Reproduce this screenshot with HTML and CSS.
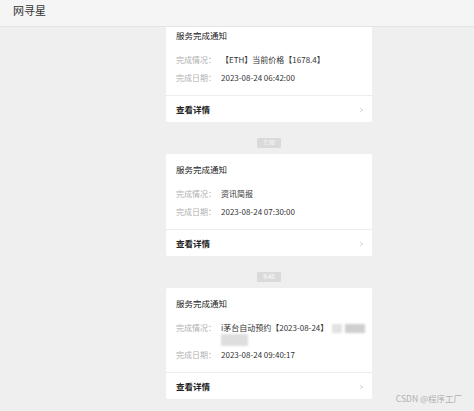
FILE: index.html
```html
<!DOCTYPE html>
<html lang="zh-CN">
<head>
<meta charset="utf-8">
<title>网寻星</title>
<link rel="stylesheet" href="styles.css">
</head>
<body>
<div class="app">
  <header class="topbar"><span class="topbar-title">网寻星</span></header>
  <main class="feed-viewport">
    <div class="feed">
      <section class="card">
        <div class="card-title">服务完成通知</div>
        <div class="rows">
          <div class="row"><span class="label">完成情况：</span><span class="value">【ETH】当前价格【1678.4】</span></div>
          <div class="row"><span class="label">完成日期：</span><span class="value">2023-08-24 06:42:00</span></div>
        </div>
        <div class="card-foot"><span>查看详情</span><span class="chev">&gt;</span></div>
      </section>

      <div class="time"><span class="badge">7:30</span></div>

      <section class="card">
        <div class="card-title">服务完成通知</div>
        <div class="rows">
          <div class="row"><span class="label">完成情况：</span><span class="value">资讯简报</span></div>
          <div class="row"><span class="label">完成日期：</span><span class="value">2023-08-24 07:30:00</span></div>
        </div>
        <div class="card-foot"><span>查看详情</span><span class="chev">&gt;</span></div>
      </section>

      <div class="time"><span class="badge">9:40</span></div>

      <section class="card">
        <div class="card-title">服务完成通知</div>
        <div class="rows">
          <div class="row"><span class="label">完成情况：</span><span class="value"><span class="line-one">i茅台自动预约【2023-08-24】<span class="blur blur-a"></span><span class="blur blur-b"></span></span><span class="blur-line"><span class="blur blur-c"></span></span></span></div>
          <div class="row"><span class="label">完成日期：</span><span class="value">2023-08-24 09:40:17</span></div>
        </div>
        <div class="card-foot"><span>查看详情</span><span class="chev">&gt;</span></div>
      </section>
    </div>
  </main>
  <div class="watermark">CSDN @程序工厂</div>
</div>
</body>
</html>
```

FILE: styles.css
```css
html, body {
  margin: 0;
  padding: 0;
}
body {
  font-family: "Noto Sans CJK SC", "Noto Sans", sans-serif;
  background: #efefef;
  color: #333;
}
.app {
  position: relative;
  width: 474px;
  height: 411px;
  display: flex;
  flex-direction: column;
  overflow: hidden;
}
.topbar {
  position: relative;
  z-index: 2;
  height: 26px;
  flex: none;
  background: #f5f5f5;
  border-bottom: 1px solid #e4e4e4;
  display: flex;
  align-items: center;
  padding-left: 13px;
}
.topbar-title {
  font-size: 11px;
  color: #333;
  margin-top: -6px;
}
.feed-viewport {
  flex: 1;
  overflow: hidden;
}
.feed {
  margin-top: -7px;
  padding-left: 166px;
  width: 206px;
  display: flex;
  flex-direction: column;
}
.card {
  background: #fff;
  border-radius: 2px;
}
.card-title {
  padding: 8px 10px 0;
  font-size: 8.5px;
  line-height: 14px;
  color: #222;
}
.rows {
  padding: 13px 10px 12px;
  display: flex;
  flex-direction: column;
  gap: 8px;
}
.row {
  display: flex;
  font-size: 8px;
  line-height: 10px;
}
.label {
  flex: none;
  width: 45px;
  color: #b0b0b0;
}
.value {
  color: #333;
  flex: 1;
  min-width: 0;
}
.line-one {
  display: block;
  white-space: nowrap;
}
.blur {
  display: inline-block;
  vertical-align: middle;
  background: #d8d8d8;
  filter: blur(1px);
  height: 9px;
}
.blur-a {
  width: 10px;
  margin-left: 4px;
  background: #e2e2e2;
}
.blur-b {
  width: 20px;
  margin-left: 3px;
  background: #cfcfcf;
}
.blur-line {
  display: block;
  height: 8px;
}
.blur-c {
  display: block;
  width: 27px;
  height: 12px;
  margin-top: 1px;
  background: #dedede;
}
.card-foot {
  border-top: 1px solid #ededed;
  height: 26px;
  padding: 0 8px 0 10px;
  display: flex;
  align-items: center;
  justify-content: space-between;
  font-size: 8.5px;
  font-weight: 600;
  color: #222;
}
.chev {
  font-weight: 400;
  color: #c8c8c8;
  font-size: 9px;
  transform: scaleX(0.7);
}
.time {
  display: flex;
  justify-content: center;
  padding: 16px 0 6px;
}
.badge {
  width: 24px;
  height: 10px;
  background: #dadada;
  color: #fff;
  font-size: 6px;
  line-height: 10px;
  text-align: center;
  border-radius: 1px;
}
.watermark {
  position: absolute;
  right: 12px;
  bottom: 7px;
  font-size: 8.5px;
  color: #b0b0b0;
  font-family: "Noto Sans CJK SC", "Liberation Sans", sans-serif;
}
```
